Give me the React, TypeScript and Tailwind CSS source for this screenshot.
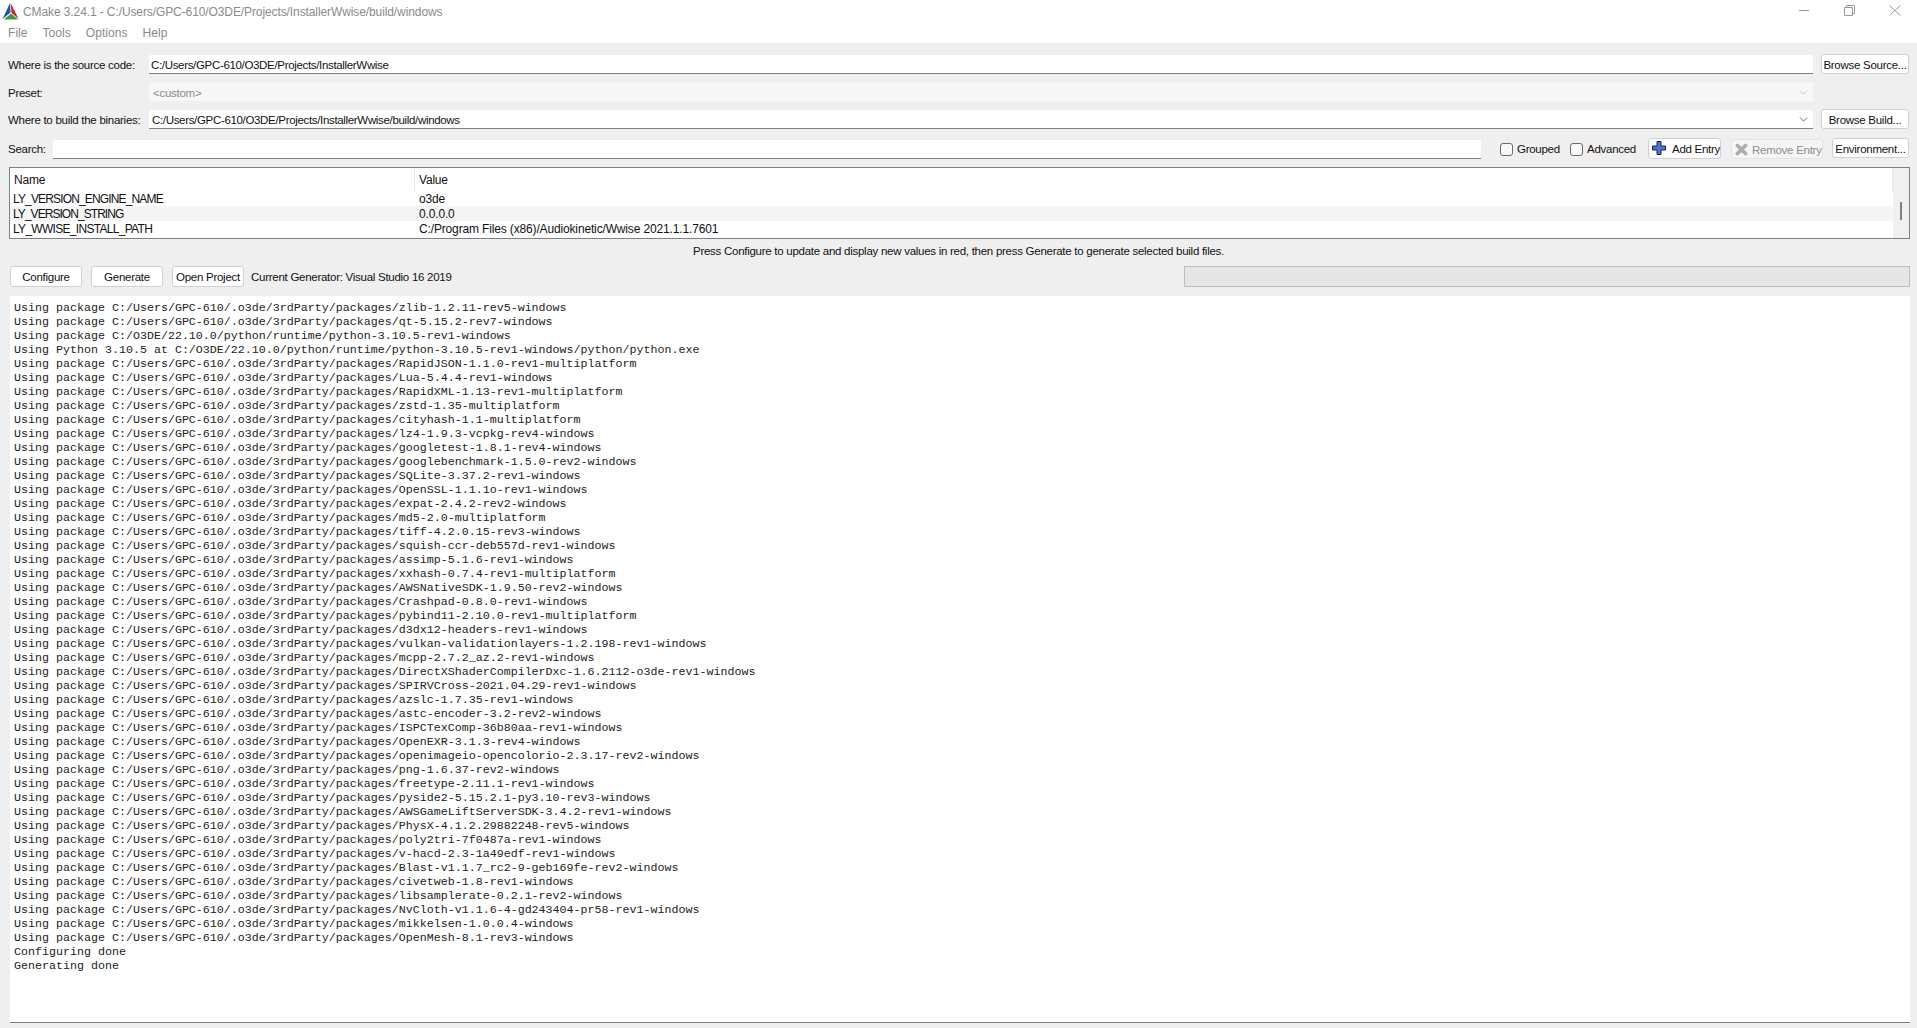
import React from 'react';
import { ChevronDown } from 'lucide-react';

const logLines = [
  'Using package C:/Users/GPC-610/.o3de/3rdParty/packages/zlib-1.2.11-rev5-windows',
  'Using package C:/Users/GPC-610/.o3de/3rdParty/packages/qt-5.15.2-rev7-windows',
  'Using package C:/O3DE/22.10.0/python/runtime/python-3.10.5-rev1-windows',
  'Using Python 3.10.5 at C:/O3DE/22.10.0/python/runtime/python-3.10.5-rev1-windows/python/python.exe',
  'Using package C:/Users/GPC-610/.o3de/3rdParty/packages/RapidJSON-1.1.0-rev1-multiplatform',
  'Using package C:/Users/GPC-610/.o3de/3rdParty/packages/Lua-5.4.4-rev1-windows',
  'Using package C:/Users/GPC-610/.o3de/3rdParty/packages/RapidXML-1.13-rev1-multiplatform',
  'Using package C:/Users/GPC-610/.o3de/3rdParty/packages/zstd-1.35-multiplatform',
  'Using package C:/Users/GPC-610/.o3de/3rdParty/packages/cityhash-1.1-multiplatform',
  'Using package C:/Users/GPC-610/.o3de/3rdParty/packages/lz4-1.9.3-vcpkg-rev4-windows',
  'Using package C:/Users/GPC-610/.o3de/3rdParty/packages/googletest-1.8.1-rev4-windows',
  'Using package C:/Users/GPC-610/.o3de/3rdParty/packages/googlebenchmark-1.5.0-rev2-windows',
  'Using package C:/Users/GPC-610/.o3de/3rdParty/packages/SQLite-3.37.2-rev1-windows',
  'Using package C:/Users/GPC-610/.o3de/3rdParty/packages/OpenSSL-1.1.1o-rev1-windows',
  'Using package C:/Users/GPC-610/.o3de/3rdParty/packages/expat-2.4.2-rev2-windows',
  'Using package C:/Users/GPC-610/.o3de/3rdParty/packages/md5-2.0-multiplatform',
  'Using package C:/Users/GPC-610/.o3de/3rdParty/packages/tiff-4.2.0.15-rev3-windows',
  'Using package C:/Users/GPC-610/.o3de/3rdParty/packages/squish-ccr-deb557d-rev1-windows',
  'Using package C:/Users/GPC-610/.o3de/3rdParty/packages/assimp-5.1.6-rev1-windows',
  'Using package C:/Users/GPC-610/.o3de/3rdParty/packages/xxhash-0.7.4-rev1-multiplatform',
  'Using package C:/Users/GPC-610/.o3de/3rdParty/packages/AWSNativeSDK-1.9.50-rev2-windows',
  'Using package C:/Users/GPC-610/.o3de/3rdParty/packages/Crashpad-0.8.0-rev1-windows',
  'Using package C:/Users/GPC-610/.o3de/3rdParty/packages/pybind11-2.10.0-rev1-multiplatform',
  'Using package C:/Users/GPC-610/.o3de/3rdParty/packages/d3dx12-headers-rev1-windows',
  'Using package C:/Users/GPC-610/.o3de/3rdParty/packages/vulkan-validationlayers-1.2.198-rev1-windows',
  'Using package C:/Users/GPC-610/.o3de/3rdParty/packages/mcpp-2.7.2_az.2-rev1-windows',
  'Using package C:/Users/GPC-610/.o3de/3rdParty/packages/DirectXShaderCompilerDxc-1.6.2112-o3de-rev1-windows',
  'Using package C:/Users/GPC-610/.o3de/3rdParty/packages/SPIRVCross-2021.04.29-rev1-windows',
  'Using package C:/Users/GPC-610/.o3de/3rdParty/packages/azslc-1.7.35-rev1-windows',
  'Using package C:/Users/GPC-610/.o3de/3rdParty/packages/astc-encoder-3.2-rev2-windows',
  'Using package C:/Users/GPC-610/.o3de/3rdParty/packages/ISPCTexComp-36b80aa-rev1-windows',
  'Using package C:/Users/GPC-610/.o3de/3rdParty/packages/OpenEXR-3.1.3-rev4-windows',
  'Using package C:/Users/GPC-610/.o3de/3rdParty/packages/openimageio-opencolorio-2.3.17-rev2-windows',
  'Using package C:/Users/GPC-610/.o3de/3rdParty/packages/png-1.6.37-rev2-windows',
  'Using package C:/Users/GPC-610/.o3de/3rdParty/packages/freetype-2.11.1-rev1-windows',
  'Using package C:/Users/GPC-610/.o3de/3rdParty/packages/pyside2-5.15.2.1-py3.10-rev3-windows',
  'Using package C:/Users/GPC-610/.o3de/3rdParty/packages/AWSGameLiftServerSDK-3.4.2-rev1-windows',
  'Using package C:/Users/GPC-610/.o3de/3rdParty/packages/PhysX-4.1.2.29882248-rev5-windows',
  'Using package C:/Users/GPC-610/.o3de/3rdParty/packages/poly2tri-7f0487a-rev1-windows',
  'Using package C:/Users/GPC-610/.o3de/3rdParty/packages/v-hacd-2.3-1a49edf-rev1-windows',
  'Using package C:/Users/GPC-610/.o3de/3rdParty/packages/Blast-v1.1.7_rc2-9-geb169fe-rev2-windows',
  'Using package C:/Users/GPC-610/.o3de/3rdParty/packages/civetweb-1.8-rev1-windows',
  'Using package C:/Users/GPC-610/.o3de/3rdParty/packages/libsamplerate-0.2.1-rev2-windows',
  'Using package C:/Users/GPC-610/.o3de/3rdParty/packages/NvCloth-v1.1.6-4-gd243404-pr58-rev1-windows',
  'Using package C:/Users/GPC-610/.o3de/3rdParty/packages/mikkelsen-1.0.0.4-windows',
  'Using package C:/Users/GPC-610/.o3de/3rdParty/packages/OpenMesh-8.1-rev3-windows',
  'Configuring done',
  'Generating done',
];

const CMakeLogo = () => (
  <svg width="17" height="17" viewBox="0 0 17 17" className="shrink-0 -mt-[1px]">
    <polygon points="8,0 8.600,9.500 0.500,16" fill="#1f56a8" />
    <polygon points="8.600,0 16.600,16 9.600,10" fill="#d2232a" />
    <polygon points="1.800,16.500 9.200,10.600 16,16.500" fill="#3f9b3f" />
  </svg>
);

const PushButton = ({ className, children, disabled }: { className: string; children: React.ReactNode; disabled?: boolean }) => (
  <button className={`flex items-center justify-center whitespace-nowrap rounded-[3px] border shrink-0 pt-[1px] ${disabled ? 'border-[#e4e4e4] bg-[#f5f5f5] text-[#8c8c8c]' : 'border-[#d0d0d0] bg-white text-[#111]'} ${className}`}>
    {children}
  </button>
);

const FieldInput = ({ className, children }: { className: string; children?: React.ReactNode }) => (
  <div className={`h-[19px] flex items-center bg-white border-b border-[#7f7f7f] rounded-t-[2px] pt-[1px] tracking-[-0.33px] ${className}`}>{children}</div>
);

const CheckBox = ({ label, className }: { label: string; className: string }) => (
  <label className={`flex items-center gap-[4px] shrink-0 ${className}`}>
    <span className="w-[13px] h-[13px] rounded-[3px] border border-[#6a6a6a] bg-[#f8f8f8] shrink-0" />
    <span>{label}</span>
  </label>
);

export default function App() {
  return (
    <div className="w-[1917px] h-[1028px] overflow-hidden flex flex-col bg-[#efefef] text-[11.5px] leading-[14px] text-[#111] font-['Liberation_Sans',sans-serif] tracking-[-0.27px]">
      {/* title bar */}
      <div className="h-[24px] bg-white flex items-center pl-[2px] shrink-0">
        <CMakeLogo />
        <span className="ml-[4px] text-[12px] text-[#8a8a8a] tracking-[-0.1px]">CMake 3.24.1 - C:/Users/GPC-610/O3DE/Projects/InstallerWwise/build/windows</span>
        <div className="ml-auto flex items-center pr-[15px] pb-[4px] gap-[35px]">
          <svg width="10" height="10" viewBox="0 0 10 10"><path d="M0 5.500h10" stroke="#9a9a9a" fill="none" /></svg>
          <svg width="11" height="11" viewBox="0 0 11 11"><path d="M0.500 2.500h8v8h-8zM2.500 2.500v-2h8v8h-2" stroke="#9a9a9a" fill="none" /></svg>
          <svg width="14" height="11" viewBox="0 0 14 11" className="-ml-[2px]"><path d="M1.500 0.500l11 10M12.500 0.500l-11 10" stroke="#9a9a9a" fill="none" /></svg>
        </div>
      </div>
      {/* menu bar */}
      <div className="h-[19px] bg-white flex items-center pl-[8px] gap-[15px] text-[12px] text-[#8a8a8a] shrink-0 pb-[2px] tracking-[0.05px]">
        <span>File</span>
        <span>Tools</span>
        <span>Options</span>
        <span>Help</span>
      </div>

      <div className="flex-1 flex flex-col min-h-0">
        <div className="flex items-start h-[20px] mt-[11px] pl-[8px] pr-[8px] shrink-0">
          <span className="w-[141px] shrink-0 pt-[4px]">Where is the source code:</span>
          <FieldInput className="flex-1 pl-[2px] mt-[1px]">C:/Users/GPC-610/O3DE/Projects/InstallerWwise</FieldInput>
          <PushButton className="w-[88px] h-[20px] ml-[8px]">Browse Source...</PushButton>
        </div>

        <div className="flex items-center h-[18px] mt-[9px] pl-[8px] pr-[104px] shrink-0">
          <span className="w-[141px] shrink-0 pt-[1px]">Preset:</span>
          <div className="flex-1 h-[18px] bg-[#f7f7f7] flex items-center pl-[4px] pt-[1px] text-[#8a8a8a] relative">
            &lt;custom&gt;
            <ChevronDown size={13} strokeWidth={1.2} className="absolute right-[3px] top-[3px] text-[#a8a8a8]" />
          </div>
        </div>

        <div className="flex items-start h-[20px] mt-[8px] pl-[8px] pr-[8px] shrink-0">
          <span className="w-[141px] shrink-0 pt-[4px]">Where to build the binaries:</span>
          <FieldInput className="flex-1 pl-[3px] mt-[1px] relative">
            C:/Users/GPC-610/O3DE/Projects/InstallerWwise/build/windows
            <ChevronDown size={13} strokeWidth={1.4} className="absolute right-[3px] top-[3px] text-[#444]" />
          </FieldInput>
          <PushButton className="w-[88px] h-[20px] ml-[8px]">Browse Build...</PushButton>
        </div>

        <div className="flex items-start h-[21px] mt-[9px] pl-[8px] pr-[8px] shrink-0">
          <span className="w-[45px] shrink-0 pt-[4px]">Search:</span>
          <FieldInput className="flex-1 mt-[2px]" />
          <div className="ml-[19px] mt-[4px]"><CheckBox label="Grouped" className="w-[58px]" /></div>
          <div className="ml-[12px] mt-[4px]"><CheckBox label="Advanced" className="w-[65px]" /></div>
          <PushButton className="w-[73px] h-[21px] ml-[13px] gap-[6px] !justify-start pl-[3px]">
            <svg width="14" height="14" viewBox="0 0 14 14" className="-mt-[2px] shrink-0">
              <path d="M5 .5h4v4.500h4.500v4H9v4.500H5V9H.5V5H5z" fill="#4f74c8" stroke="#14206e" />
            </svg>
            Add Entry
          </PushButton>
          <PushButton disabled className="w-[92px] h-[20px] ml-[10px] gap-[4px] !justify-start pl-[3px] mt-[1px]">
            <svg width="13" height="13" viewBox="0 0 13 13" className="-mt-[1px] shrink-0">
              <path d="M2.500 2.500l8 8M10.500 2.500l-8 8" stroke="#adadad" strokeWidth="3.800" strokeLinecap="round" />
            </svg>
            Remove Entry
          </PushButton>
          <PushButton className="w-[77px] h-[20px] ml-[9px]">Environment...</PushButton>
        </div>

        {/* cache table */}
        <div className="h-[72px] mt-[8px] ml-[9px] mr-[7px] border border-[#7f8085] bg-white flex shrink-0">
          <div className="flex-1 min-w-0 flex flex-col">
            <div className="h-[23px] flex items-center shrink-0 text-[12px] tracking-[-0.2px]">
              <div className="w-[405px] h-full flex items-center pl-[4px] pt-[1px] border-r border-[#e8e8e8]">Name</div>
              <div className="flex-1 h-full flex items-center pl-[4px] pt-[1px] border-r border-[#e8e8e8]">Value</div>
            </div>
            <div className="h-[15px] flex items-center pt-[1px] shrink-0 text-[12px]">
              <span className="w-[409px] pl-[3px] tracking-[-0.85px]">LY_VERSION_ENGINE_NAME</span><span className="tracking-[-0.15px]">o3de</span>
            </div>
            <div className="h-[15px] flex items-center pt-[1px] bg-[#f5f5f5] shrink-0 text-[12px]">
              <span className="w-[409px] pl-[3px] tracking-[-0.95px]">LY_VERSION_STRING</span><span className="tracking-[-0.15px]">0.0.0.0</span>
            </div>
            <div className="h-[15px] flex items-center pt-[1px] shrink-0 text-[12px]">
              <span className="w-[409px] pl-[3px] tracking-[-0.7px]">LY_WWISE_INSTALL_PATH</span><span className="tracking-[-0.15px]">C:/Program Files (x86)/Audiokinetic/Wwise 2021.1.1.7601</span>
            </div>
          </div>
          <div className="w-[16px] bg-[#f0f0f0] flex justify-center pt-[34px] shrink-0">
            <div className="w-[2px] h-[18px] bg-[#7f7f7f]" />
          </div>
        </div>

        <div className="h-[27px] flex items-center justify-center pb-[3px] shrink-0">Press Configure to update and display new values in red, then press Generate to generate selected build files.</div>

        <div className="h-[21px] flex items-center pl-[10px] pr-[7px] shrink-0">
          <PushButton className="w-[72px] h-[21px]">Configure</PushButton>
          <PushButton className="w-[72px] h-[21px] ml-[9px]">Generate</PushButton>
          <PushButton className="w-[72px] h-[21px] ml-[9px]">Open Project</PushButton>
          <span className="ml-[7px] pt-[1px]">Current Generator: Visual Studio 16 2019</span>
          <div className="ml-auto w-[726px] h-[21px] bg-[#e5e5e5] border border-[#bdbdbd]" />
        </div>

        {/* output log */}
        <div className="h-[727px] mt-[9px] ml-[10px] mr-[7px] bg-white border-b border-[#7f7f7f] pl-[4px] pt-[5px] shrink-0 overflow-hidden font-['Liberation_Mono',monospace] text-[11.67px] leading-[14px] tracking-normal text-[#222]">
          {logLines.map((line, i) => (
            <div key={i} className="whitespace-pre">{line}</div>
          ))}
        </div>
      </div>
    </div>
  );
}
